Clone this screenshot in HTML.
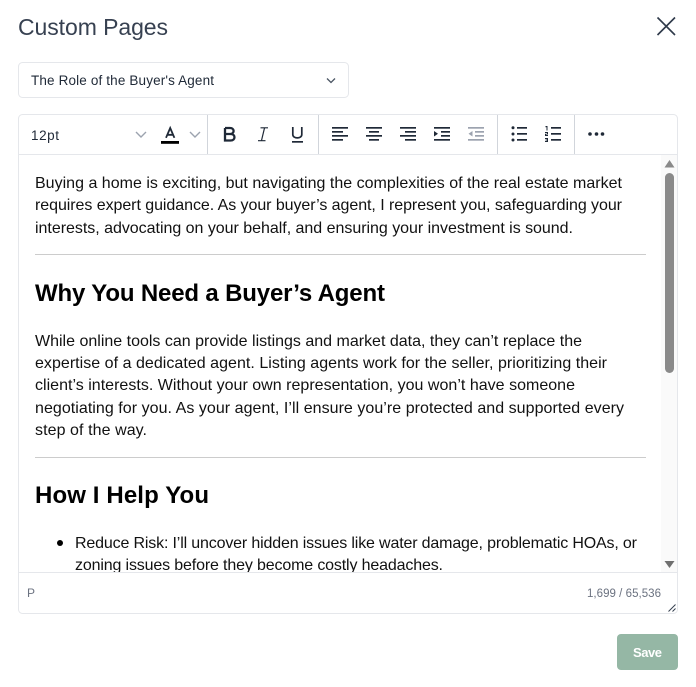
<!DOCTYPE html>
<html><head><meta charset="utf-8">
<style>
html,body{margin:0;padding:0;background:#fff;width:696px;height:687px;overflow:hidden}
svg{display:block;position:absolute;left:0;top:0}
text{font-family:"Liberation Sans",sans-serif}
.b{font-size:16px;fill:#111}
.h{font-size:24px;font-weight:bold;fill:#000}
</style></head><body>
<svg width="696" height="687" viewBox="0 0 696 687" xmlns="http://www.w3.org/2000/svg">
<defs><clipPath id="c"><rect x="19" y="155" width="659" height="417"/></clipPath></defs>
<text x="18" y="35" font-size="23" fill="#374151" textLength="150" lengthAdjust="spacing">Custom Pages</text>
<path d="M657.5 17.5L675 35M675 17.5L657.5 35" stroke="#2f3a4a" stroke-width="1.6" fill="none"/>

<rect x="18.5" y="62.5" width="330" height="35" rx="4" fill="#fff" stroke="#e5e7eb"/>
<text x="31" y="85" font-size="13.500" fill="#1f2937" textLength="183" lengthAdjust="spacing">The Role of the Buyer's Agent</text>
<path d="M327 78.5L331 82.5L335 78.5" stroke="#4b5563" stroke-width="1.3" fill="none"/>

<rect x="18.5" y="114.5" width="659" height="499" rx="4" fill="#fff" stroke="#e5e7eb"/>
<path d="M19 154.5H677M19 572.5H677" stroke="#e5e7eb"/>
<path d="M207.5 115V154M318.5 115V154M497.5 115V154M574.5 115V154" stroke="#d1d5db"/>

<text x="31" y="140" font-size="13.500" fill="#1f2937" textLength="28" lengthAdjust="spacing">12pt</text>
<path d="M136 132L141 137L146 132M190 132L195 137L200 132" stroke="#9ca3af" stroke-width="1.400" fill="none"/>
<path d="M166 137.800L170.200 128L174.400 137.800M167.300 134.800H173.100" stroke="#1f2937" stroke-width="1.800" fill="none"/>
<rect x="161" y="141" width="18" height="2.800" fill="#000"/>

<path d="M225 128H230C234.800 128 234.800 134 230 134H225M225 134H230.500C235.800 134 235.800 140.500 230.500 140.500H225V128" stroke="#1f2937" stroke-width="2.300" fill="none"/>
<path d="M260.500 127.800H268M258 140.700H265.500M264.500 128L261.500 140.500" stroke="#1f2937" stroke-width="1.200" fill="none"/>
<path d="M292.800 127V134.500C292.800 139 301.800 139 301.800 134.500V127" stroke="#1f2937" stroke-width="1.700" fill="none"/>
<rect x="292" y="141" width="11" height="1.700" fill="#1f2937"/>

<g fill="#1f2937">
<rect x="332" y="127" width="16" height="1.700"/><rect x="332" y="131" width="11" height="1.700"/><rect x="332" y="135" width="16" height="1.700"/><rect x="332" y="139" width="11" height="1.700"/>
<rect x="366" y="127" width="16" height="1.700"/><rect x="369" y="131" width="10" height="1.700"/><rect x="366" y="135" width="16" height="1.700"/><rect x="369" y="139" width="10" height="1.700"/>
<rect x="400" y="127" width="16" height="1.700"/><rect x="405" y="131" width="11" height="1.700"/><rect x="400" y="135" width="16" height="1.700"/><rect x="405" y="139" width="11" height="1.700"/>
<rect x="434" y="127" width="16" height="1.700"/><rect x="441" y="131" width="9" height="1.700"/><rect x="441" y="135" width="9" height="1.700"/><rect x="434" y="139" width="16" height="1.700"/><path d="M434 131L438 133.800L434 136.500Z"/>
</g>
<g fill="#9ca3af">
<rect x="468" y="127" width="16" height="1.700"/><rect x="475" y="131" width="9" height="1.700"/><rect x="475" y="135" width="9" height="1.700"/><rect x="468" y="139" width="16" height="1.700"/><path d="M472.500 131L468.500 133.800L472.500 136.500Z"/>
</g>
<g fill="#1f2937">
<circle cx="513" cy="127.800" r="1.500"/><circle cx="513" cy="134" r="1.500"/><circle cx="513" cy="140" r="1.500"/>
<rect x="517" y="127" width="10" height="1.700"/><rect x="517" y="133" width="10" height="1.700"/><rect x="517" y="139" width="10" height="1.700"/>
<rect x="551" y="127" width="10" height="1.700"/><rect x="551" y="133" width="10" height="1.700"/><rect x="551" y="139" width="10" height="1.700"/>
<path d="M545.500 126H547.500V130.500H546.500V127.200H545.500ZM545 132H548V134.500H546V135H548V136H545V133.700H547V133H545ZM545 138H548V142H545V141H547V140.500H545.500V139.500H547V139H545Z"/>
<circle cx="590" cy="134" r="1.800"/><circle cx="596.500" cy="134" r="1.800"/><circle cx="602.500" cy="134" r="1.800"/>
</g>

<g clip-path="url(#c)">
<text class="b" x="35" y="188" textLength="587" lengthAdjust="spacing">Buying a home is exciting, but navigating the complexities of the real estate market</text>
<text class="b" x="35" y="210" textLength="587" lengthAdjust="spacing">requires expert guidance. As your buyer’s agent, I represent you, safeguarding your</text>
<text class="b" x="35" y="233" textLength="538" lengthAdjust="spacing">interests, advocating on your behalf, and ensuring your investment is sound.</text>
<rect x="35" y="254" width="611" height="1" fill="#ccc"/>
<text class="h" x="35" y="301" textLength="350" lengthAdjust="spacing">Why You Need a Buyer’s Agent</text>
<text class="b" x="35" y="346" textLength="547" lengthAdjust="spacing">While online tools can provide listings and market data, they can’t replace the</text>
<text class="b" x="35" y="368" textLength="572" lengthAdjust="spacing">expertise of a dedicated agent. Listing agents work for the seller, prioritizing their</text>
<text class="b" x="35" y="390" textLength="540" lengthAdjust="spacing">client’s interests. Without your own representation, you won’t have someone</text>
<text class="b" x="35" y="413" textLength="589" lengthAdjust="spacing">negotiating for you. As your agent, I’ll ensure you’re protected and supported every</text>
<text class="b" x="35" y="435" textLength="112" lengthAdjust="spacing">step of the way.</text>
<rect x="35" y="457" width="611" height="1" fill="#ccc"/>
<text class="h" x="35" y="503" textLength="174" lengthAdjust="spacing">How I Help You</text>
<circle cx="60" cy="543" r="3" fill="#000"/>
<text class="b" x="75" y="548" textLength="562" lengthAdjust="spacing">Reduce Risk: I’ll uncover hidden issues like water damage, problematic HOAs, or</text>
<text class="b" x="75" y="570" textLength="368" lengthAdjust="spacing">zoning issues before they become costly headaches.</text>
</g>

<rect x="661" y="155" width="16" height="417" fill="#fafafa"/>
<rect x="665" y="173" width="9" height="200" rx="4.500" fill="#8a8a8a"/>
<path d="M669.500 160L674.500 167.500H664.500Z" fill="#8a8a8a"/>
<path d="M669.500 568L674.500 561H664.500Z" fill="#6f6f6f"/>

<text x="27" y="597" font-size="12" fill="#6b7280">P</text>
<text x="587" y="597" font-size="11.500" fill="#6b7280" textLength="74" lengthAdjust="spacing">1,699 / 65,536</text>
<path d="M668.500 611.500L675.500 604.500M672.500 611.500L675.500 608.500" stroke="#374151" stroke-width="1" fill="none"/>

<rect x="617" y="634" width="61" height="36" rx="4" fill="#95b7a5"/>
<text x="633" y="657" font-size="13" font-weight="bold" fill="#fff" textLength="29" lengthAdjust="spacing">Save</text>
</svg>
</body></html>
